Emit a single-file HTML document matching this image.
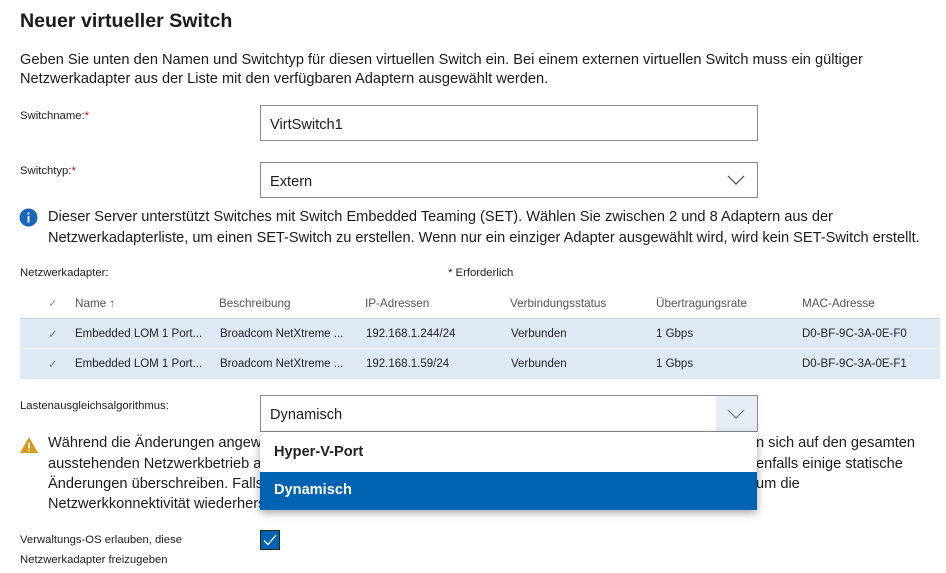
<!DOCTYPE html>
<html><head><meta charset="utf-8"><style>
*{margin:0;padding:0;box-sizing:border-box}
body{width:946px;height:573px;background:#fff;font-family:"Liberation Sans",Arial,sans-serif;color:#1b1b1b;position:relative;overflow:hidden}
.a{position:absolute;white-space:nowrap}
.t{font-size:14.6px}
.s{font-size:11.3px}
.h{font-size:11.7px;color:#555}
.r{font-size:11.5px;color:#222}
.box{position:absolute;border:1px solid #8a8a8a;background:#fff}
.req{color:#c00}
</style></head><body>
<div class="a" style="left:20px;top:10px;font-size:19.6px;font-weight:bold">Neuer virtueller Switch</div>
<div class="a t" style="left:20px;top:52px">Geben Sie unten den Namen und Switchtyp für diesen virtuellen Switch ein. Bei einem externen virtuellen Switch muss ein gültiger</div>
<div class="a t" style="left:20px;top:71px">Netzwerkadapter aus der Liste mit den verfügbaren Adaptern ausgewählt werden.</div>

<div class="a s" style="left:20px;top:110px">Switchname:<span class="req">*</span></div>
<div class="box" style="left:260px;top:105px;width:498px;height:36px"></div>
<div class="a t" style="left:270px;top:117px">VirtSwitch1</div>

<div class="a s" style="left:20px;top:165px">Switchtyp:<span class="req">*</span></div>
<div class="box" style="left:260px;top:162px;width:498px;height:36px"></div>
<div class="a t" style="left:270px;top:174px">Extern</div>
<svg class="a" style="left:727px;top:174px" width="18" height="12"><path d="M1 2 L9 10 L17 2" fill="none" stroke="#444" stroke-width="1.2"/></svg>

<svg class="a" style="left:19px;top:208px" width="19" height="19"><circle cx="9.5" cy="9.5" r="9" fill="#1a66b8"/><rect x="8.6" y="8" width="1.8" height="6.5" fill="#fff"/><circle cx="9.5" cy="5.5" r="1.1" fill="#fff"/></svg>
<div class="a t" style="left:48px;top:209px">Dieser Server unterstützt Switches mit Switch Embedded Teaming (SET). Wählen Sie zwischen 2 und 8 Adaptern aus der</div>
<div class="a t" style="left:48px;top:230px">Netzwerkadapterliste, um einen SET-Switch zu erstellen. Wenn nur ein einziger Adapter ausgewählt wird, wird kein SET-Switch erstellt.</div>

<div class="a s" style="left:20px;top:267px">Netzwerkadapter:</div>
<div class="a s" style="left:448px;top:267px">* Erforderlich</div>

<div class="a h" style="left:48px;top:296px;color:#999">✓</div>
<div class="a h" style="left:75px;top:297px">Name ↑</div>
<div class="a h" style="left:219px;top:297px">Beschreibung</div>
<div class="a h" style="left:365px;top:297px">IP-Adressen</div>
<div class="a h" style="left:510px;top:297px">Verbindungsstatus</div>
<div class="a h" style="left:656px;top:297px">Übertragungsrate</div>
<div class="a h" style="left:802px;top:297px">MAC-Adresse</div>

<div class="a" style="left:20px;top:318px;width:920px;height:30px;background:#dfe9f5;border-top:1px solid #c9d6e6"></div>
<div class="a" style="left:20px;top:349px;width:920px;height:30px;background:#dfe9f5"></div>
<div class="a r" style="left:48px;top:327px;color:#777">✓</div>
<div class="a r" style="left:75px;top:328px">Embedded LOM 1 Port...</div>
<div class="a r" style="left:220px;top:328px">Broadcom NetXtreme ...</div>
<div class="a r" style="left:366px;top:328px">192.168.1.244/24</div>
<div class="a r" style="left:511px;top:328px">Verbunden</div>
<div class="a r" style="left:656px;top:328px">1 Gbps</div>
<div class="a r" style="left:802px;top:328px">D0-BF-9C-3A-0E-F0</div>
<div class="a r" style="left:48px;top:357px;color:#777">✓</div>
<div class="a r" style="left:75px;top:358px">Embedded LOM 1 Port...</div>
<div class="a r" style="left:220px;top:358px">Broadcom NetXtreme ...</div>
<div class="a r" style="left:366px;top:358px">192.168.1.59/24</div>
<div class="a r" style="left:511px;top:358px">Verbunden</div>
<div class="a r" style="left:656px;top:358px">1 Gbps</div>
<div class="a r" style="left:802px;top:358px">D0-BF-9C-3A-0E-F1</div>

<div class="a s" style="left:20px;top:400px">Lastenausgleichsalgorithmus:</div>

<svg class="a" style="left:19px;top:436px" width="20" height="18"><path d="M10 1 L19 17 L1 17 Z" fill="#d19b1f"/><rect x="9.2" y="6.5" width="1.6" height="6" fill="#fff"/><circle cx="10" cy="14.5" r="0.9" fill="#fff"/></svg>
<div class="a t" style="left:48px;top:435px">Während die Änderungen angewendet</div>
<div class="a t" style="left:48px;top:456px">ausstehenden Netzwerkbetrieb aus</div>
<div class="a t" style="left:48px;top:476px">Änderungen überschreiben. Falls Sie</div>
<div class="a t" style="left:48px;top:496px">Netzwerkkonnektivität wiederherstellen</div>
<div class="a t" style="left:756px;top:435px">n sich auf den gesamten</div>
<div class="a t" style="left:756px;top:456px">enfalls einige statische</div>
<div class="a t" style="left:756px;top:476px">um die</div>

<div class="box" style="left:260px;top:395px;width:498px;height:37px"></div>
<div class="a" style="left:716px;top:396px;width:41px;height:35px;background:#e6edf6"></div>
<div class="a t" style="left:270px;top:407px">Dynamisch</div>
<svg class="a" style="left:727px;top:408px" width="18" height="12"><path d="M1 2 L9 10 L17 2" fill="none" stroke="#777" stroke-width="1.2"/></svg>

<div class="a" style="left:260px;top:432px;width:497px;height:78px;background:#fff;box-shadow:0 3px 8px rgba(0,0,0,.35)"></div>
<div class="a t" style="left:274px;top:444px;font-weight:bold;color:#222">Hyper-V-Port</div>
<div class="a" style="left:260px;top:472px;width:497px;height:38px;background:#0063b1"></div>
<div class="a t" style="left:274px;top:482px;font-weight:bold;color:#fff">Dynamisch</div>

<div class="a s" style="left:20px;top:534px">Verwaltungs-OS erlauben, diese</div>
<div class="a s" style="left:20px;top:554px">Netzwerkadapter freizugeben</div>
<div class="a" style="left:260px;top:530px;width:20px;height:20px;background:#0063b1;border:1px solid #222"></div>
<svg class="a" style="left:262px;top:532px" width="16" height="16"><path d="M2 8.5 L6 12.5 L14 3" fill="none" stroke="#fff" stroke-width="1.3"/></svg>
</body></html>
